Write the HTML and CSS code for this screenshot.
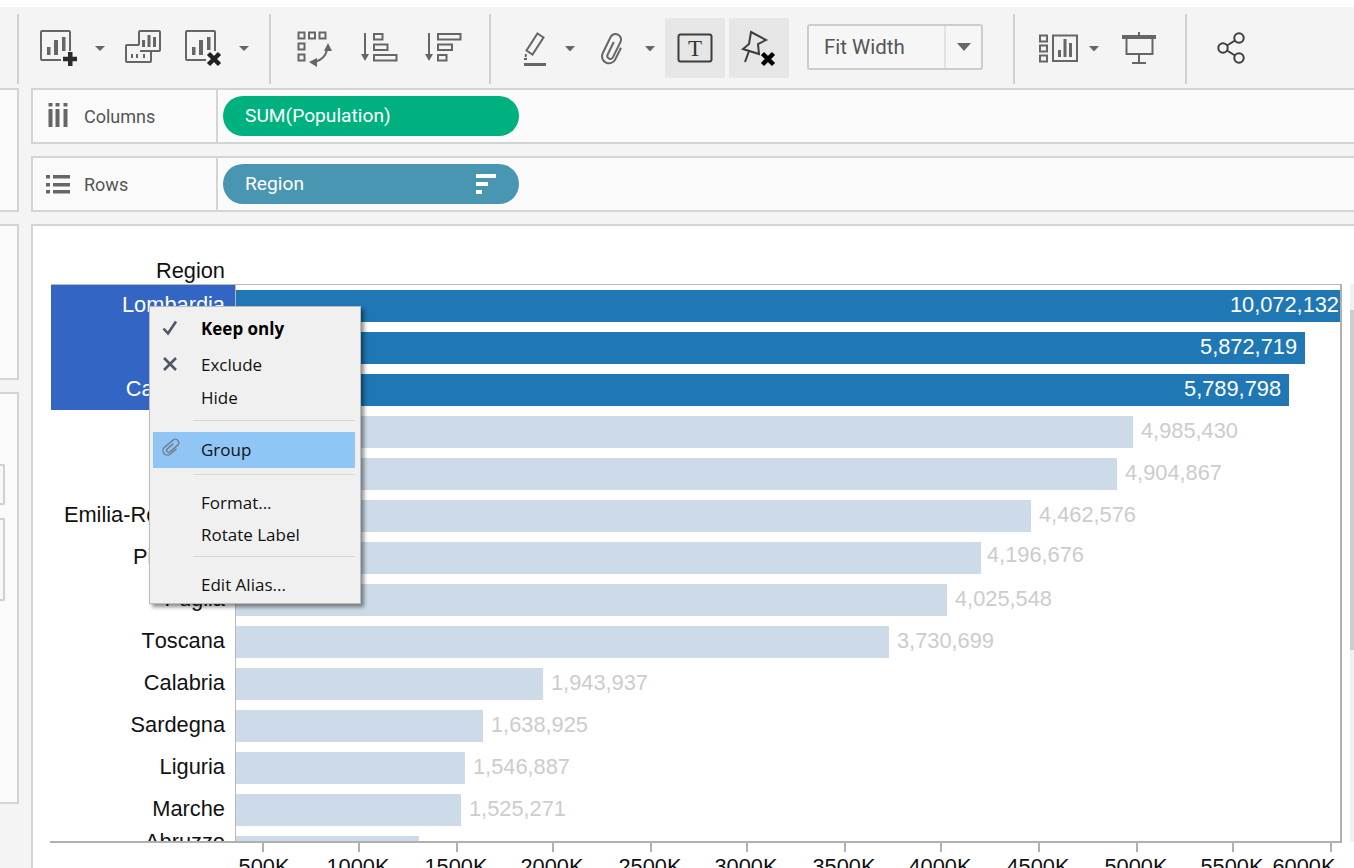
FILE: index.html
```html
<!DOCTYPE html>
<html lang="en">
<head>
<meta charset="utf-8">
<title>Region population</title>
<link rel="stylesheet" href="styles.css">
</head>
<body>
<div class="topgap"></div>
<header class="toolbar">
  <span class="sep s1"></span>
  <svg class="tool t-add" width="65" height="48" viewBox="40 24 65 48">
    <path class="st" d="M70 51V32a1 1 0 0 0-1-1H42a1 1 0 0 0-1 1v27a1 1 0 0 0 1 1h19"/>
    <path class="fl" d="M47 47h3.500v8H47zM54 40h4v15h-4zM62 37h3.500v14H62z"/>
    <path class="dk" d="M68 52h4.500v4.800H77v4.400h-4.500V66H68v-4.800h-5v-4.400h5z"/>
    <path class="fl" d="M95 46h10l-5 5z"/>
  </svg>
  <svg class="tool t-dup" width="37" height="48" viewBox="125 24 37 48">
    <path class="st" d="M139 45v-13a1 1 0 0 1 1-1h19a1 1 0 0 1 1 1v18a1 1 0 0 1-1 1h-7M139 45h-12a1 1 0 0 0-1 1v15a1 1 0 0 0 1 1h23a1 1 0 0 0 1-1v-10h-11"/>
    <path class="fl" d="M142 40h3v7h-3zM147.500 35h3v12h-3zM153 37h3v10h-3zM131 54h2v4h-2zM136 54h2v4h-2zM143 54h2v4h-2z"/>
  </svg>
  <svg class="tool t-clear" width="65" height="48" viewBox="185 24 65 48">
    <path class="st" d="M215 51V32a1 1 0 0 0-1-1h-27a1 1 0 0 0-1 1v27a1 1 0 0 0 1 1h19"/>
    <path class="fl" d="M192 47h3.500v8H192zM199 40h4v15h-4zM207 37h3.500v13H207z"/>
    <path class="xm" d="M208.500 53.500l11 11M219.500 53.500l-11 11"/>
    <path class="fl" d="M239 46h10l-5 5z"/>
  </svg>
  <span class="sep s2"></span>
  <svg class="tool t-swap" width="36" height="48" viewBox="297 24 36 48">
    <path class="st" d="M298.500 32.500h6v6h-6zM309 32.500h6v6h-6zM319.500 32.500h6v6h-6zM298.500 43.500h6v6h-6zM298.500 54.500h6v6h-6zM327 50q-2 9-12 12"/>
    <path class="fl" d="M328 43l4 8h-8zM309 62l8-4v9z"/>
  </svg>
  <svg class="tool t-asc" width="37" height="48" viewBox="361 24 37 48">
    <path class="st" d="M365 33v24M374 34h8.500v5.500H374zM374 44.500h13.500V50H374zM374 55h22.500v5.500H374z"/>
    <path class="fl" d="M361 54h8l-4 7z"/>
  </svg>
  <svg class="tool t-desc" width="37" height="48" viewBox="425 24 37 48">
    <path class="st" d="M429 33v24M438 34h22.500v5.500H438zM438 44.500h14V50H438zM438 55h8.500v5.500H438z"/>
    <path class="fl" d="M425 54h8l-4 7z"/>
  </svg>
  <span class="sep s3"></span>
  <svg class="tool t-hl" width="52" height="48" viewBox="523 24 52 48">
    <path class="st" d="M537.500 33.500l6 4-11 17-6-4zM526 54l-.5 3"/>
    <path class="fl" d="M524 63h22v3h-22zM524 58h3v2h-3z"/>
    <path class="fl" d="M565 46h10l-5 5.500z"/>
  </svg>
  <svg class="tool t-clip" width="55" height="48" viewBox="600 24 55 48">
    <path class="st" transform="translate(612.500 48) rotate(26)" d="M-1.500-6V8a3 3 0 0 0 6 0V-9a5.500 5.500 0 0 0-11 0V9a7 7 0 0 0 14 0V-4"/>
    <path class="fl" d="M645 46h10l-5 5.500z"/>
  </svg>
  <span class="toggle tg-text">
    <svg width="36" height="30" viewBox="677 32 36 30">
      <rect class="st-dark" x="678.500" y="33.500" width="33" height="27" rx="2"/>
      <text class="serif-t" x="695" y="55">T</text>
    </svg>
  </span>
  <span class="toggle tg-pin">
    <svg width="38" height="38" viewBox="744 30 38 38">
      <path class="st-dark" d="M755 33l15 8-8 4 1 10-16-5 6-5zM753 52l-4 11"/>
      <path class="xm-b" d="M766.500 54.500l11 11M777.500 54.500l-11 11"/>
    </svg>
  </span>
  <div class="fit">
    <span class="fit-label">Fit Width</span>
    <span class="fit-drop"><span class="fit-caret"></span></span>
  </div>
  <span class="sep s4"></span>
  <svg class="tool t-show" width="60" height="48" viewBox="1039 24 60 48">
    <path class="st" d="M1040 35.500h7v6h-7zM1040 45.500h7v6h-7zM1040 55.500h7v6h-7zM1053 35.500h24v25.500h-24z"/>
    <path class="fl" d="M1058 50h3v7h-3zM1063.500 39h3v18h-3zM1069 43h3v14h-3zM1089 46h10l-5 5.500z"/>
  </svg>
  <svg class="tool t-pres" width="34" height="48" viewBox="1122 24 34 48">
    <path class="fl" d="M1122 35h34v4h-34zM1138 32h2v4h-2zM1138 54h2v9h-2zM1132 62h14v2h-14z"/>
    <path class="st" d="M1126.500 38v16h26V38"/>
  </svg>
  <span class="sep s5"></span>
  <svg class="tool t-share" width="30" height="48" viewBox="1216 24 30 48">
    <circle class="st-dark" cx="1239" cy="38" r="4.700"/>
    <circle class="st-dark" cx="1223" cy="48" r="4.700"/>
    <circle class="st-dark" cx="1239" cy="58" r="4.700"/>
    <path class="st-dark" d="M1227 45.500l8-5M1227 50.500l8 5"/>
  </svg>
</header>

<div class="workspace">
  <aside class="side">
    <div class="panel p1"></div>
    <div class="panel p2"></div>
    <div class="panel p3">
      <div class="stub st1"></div>
      <div class="stub st2"></div>
    </div>
  </aside>
  <main class="main">
    <section class="shelf">
      <div class="shelf-name">
        <svg class="shelf-ic" width="20" height="26" viewBox="0 0 20 26">
          <path class="fl" d="M0 0h4v3.500H0zM7 0h4v3.500H7zM15 0h4v3.500h-4zM0 6h4v18H0zM7 6h4v18H7zM15 6h4v18h-4z"/>
        </svg>
        <span>Columns</span>
      </div>
      <div class="pill pill-green">SUM(Population)</div>
    </section>
    <section class="shelf">
      <div class="shelf-name">
        <svg class="shelf-ic" width="25" height="20" viewBox="0 0 25 20">
          <path class="fl" d="M0 1h4v3.500H0zM7 1h17v3.500H7zM0 9h4v3.500H0zM7 9h17v3.500H7zM0 16h4v3.500H0zM7 16h17v3.500H7z"/>
        </svg>
        <span>Rows</span>
      </div>
      <div class="pill pill-blue">
        <span>Region</span>
        <svg class="pill-sort" width="20" height="20" viewBox="0 0 20 20"><path class="wh" d="M0 0h20v4H0zM0 8h12v4H0zM0 16h6v4H0z"/></svg>
      </div>
    </section>
    <section class="view">
      <div class="head">Region</div>
      <div class="body">
        <div class="row"><div class="lbl sel">Lombardia</div><div class="plot"><div class="bar bar-on" style="width:1104px"><span>10,072,132</span></div></div></div>
        <div class="row"><div class="lbl sel">Lazio</div><div class="plot"><div class="bar bar-on bar-pad" style="width:1069px"><span>5,872,719</span></div></div></div>
        <div class="row"><div class="lbl sel sel-end">Campania</div><div class="plot"><div class="bar bar-on bar-pad" style="width:1053px"><span>5,789,798</span></div></div></div>
        <div class="row"><div class="lbl">Sicilia</div><div class="plot"><div class="bar" style="width:897px"></div><span class="val">4,985,430</span></div></div>
        <div class="row"><div class="lbl">Veneto</div><div class="plot"><div class="bar" style="width:881px"></div><span class="val">4,904,867</span></div></div>
        <div class="row"><div class="lbl">Emilia-Romagna</div><div class="plot"><div class="bar" style="width:795px"></div><span class="val">4,462,576</span></div></div>
        <div class="row"><div class="lbl">Piemonte</div><div class="plot"><div class="bar" style="width:745px"></div><span class="val val-near">4,196,676</span></div></div>
        <div class="row"><div class="lbl">Puglia</div><div class="plot"><div class="bar" style="width:711px"></div><span class="val">4,025,548</span></div></div>
        <div class="row"><div class="lbl">Toscana</div><div class="plot"><div class="bar" style="width:653px"></div><span class="val">3,730,699</span></div></div>
        <div class="row"><div class="lbl">Calabria</div><div class="plot"><div class="bar" style="width:307px"></div><span class="val">1,943,937</span></div></div>
        <div class="row"><div class="lbl">Sardegna</div><div class="plot"><div class="bar" style="width:247px"></div><span class="val">1,638,925</span></div></div>
        <div class="row"><div class="lbl">Liguria</div><div class="plot"><div class="bar" style="width:229px"></div><span class="val">1,546,887</span></div></div>
        <div class="row"><div class="lbl">Marche</div><div class="plot"><div class="bar" style="width:225px"></div><span class="val">1,525,271</span></div></div>
        <div class="row"><div class="lbl lbl-clip">Abruzzo</div><div class="plot"><div class="bar" style="width:183px"></div><span class="val">1,307,309</span></div></div>
      </div>
      <div class="axis">
        <i class="tick" style="left:212px"></i><span class="tl" style="left:214px">500K</span>
        <i class="tick" style="left:308px"></i><span class="tl" style="left:308px">1000K</span>
        <i class="tick" style="left:406px"></i><span class="tl" style="left:406px">1500K</span>
        <i class="tick" style="left:502px"></i><span class="tl" style="left:502px">2000K</span>
        <i class="tick" style="left:600px"></i><span class="tl" style="left:600px">2500K</span>
        <i class="tick" style="left:696px"></i><span class="tl" style="left:696px">3000K</span>
        <i class="tick" style="left:794px"></i><span class="tl" style="left:794px">3500K</span>
        <i class="tick" style="left:890px"></i><span class="tl" style="left:890px">4000K</span>
        <i class="tick" style="left:988px"></i><span class="tl" style="left:988px">4500K</span>
        <i class="tick" style="left:1086px"></i><span class="tl" style="left:1086px">5000K</span>
        <i class="tick" style="left:1182px"></i><span class="tl" style="left:1182px">5500K</span>
        <i class="tick" style="left:1280px"></i><span class="tl" style="left:1254px">6000K</span>
      </div>
      <div class="scroll"><div class="thumb"></div></div>
    </section>
    <nav class="menu">
      <div class="mi mi-first mi-bold">
        <svg class="mi-ic" width="18" height="18" viewBox="0 0 18 18"><path class="chk" d="M2.500 9.500l4.500 5L15 2.500"/></svg>
        <span>Keep only</span>
      </div>
      <div class="mi mi-excl">
        <svg class="mi-ic" width="18" height="18" viewBox="0 0 18 18"><path class="chk" d="M3 3l12 12M15 3L3 15"/></svg>
        <span>Exclude</span>
      </div>
      <div class="mi mi-hide"><span>Hide</span></div>
      <div class="msep"></div>
      <div class="mi mi-on">
        <svg class="mi-ic" width="20" height="18" viewBox="0 0 20 18"><path class="clip" transform="translate(10 9) rotate(50)" d="M-1-4V4a2 2 0 0 0 4 0V-6a3.500 3.500 0 0 0-7 0V5a4.500 4.500 0 0 0 9 0V-3"/></svg>
        <span>Group</span>
      </div>
      <div class="msep"></div>
      <div class="mi"><span>Format...</span></div>
      <div class="mi"><span>Rotate Label</span></div>
      <div class="msep msep-tight"></div>
      <div class="mi"><span>Edit Alias...</span></div>
    </nav>
  </main>
</div>
</body>
</html>
```
FILE: styles.css
```css
* { box-sizing: border-box; }
html, body { margin: 0; padding: 0; height: 868px; overflow: hidden; }
body { background: #f4f4f4; font-family: "Roboto", "Liberation Sans", sans-serif; }
.topgap { height: 7px; background: #fff; }

.toolbar { display: flex; align-items: flex-start; height: 81px; padding-top: 7px; background: #f4f4f4; }
.sep { flex: none; width: 2px; height: 70px; background: #d0d0d0; }
.tool { flex: none; display: block; margin-top: 10px; }
.st { fill: none; stroke: #666; stroke-width: 2; }
.st-dark { fill: none; stroke: #3d3d3d; stroke-width: 2; }
.fl { fill: #666; }
.dk { fill: #2b2b2b; }
.xm { fill: none; stroke: #222; stroke-width: 4.500; }
.xm-b { fill: none; stroke: #000; stroke-width: 4.500; }
.serif-t { font-family: "Liberation Serif", serif; font-size: 23px; fill: #333; text-anchor: middle; }
.s1 { margin-left: 17px; }
.t-add { margin-left: 21px; }
.t-dup { margin-left: 20px; }
.t-clear { margin-left: 23px; }
.s2 { margin-left: 19px; }
.t-swap { margin-left: 26px; }
.t-asc { margin-left: 28px; }
.t-desc { margin-left: 27px; }
.s3 { margin-left: 27px; }
.t-hl { margin-left: 32px; }
.t-clip { margin-left: 25px; }
.toggle { flex: none; display: flex; align-items: center; justify-content: center; width: 60px; height: 60px; margin-top: 4px; background: #e6e6e6; }
.tg-text { margin-left: 10px; }
.tg-pin { margin-left: 4px; }
.fit { flex: none; display: flex; width: 176px; height: 46px; margin: 10px 0 0 18px; border: 2px solid #ccc; border-radius: 3px; background: #f6f6f6; }
.fit-label { flex: 1; padding-left: 15px; line-height: 42px; font-size: 20.500px; color: #555; }
.fit-drop { flex: none; display: flex; align-items: center; justify-content: center; width: 37px; border-left: 2px solid #e2e2e2; }
.fit-caret { width: 0; height: 0; border-style: solid; border-width: 8px 7px 0; border-color: #666 transparent transparent; }
.s4 { margin-left: 30px; }
.t-show { margin-left: 24px; }
.t-pres { margin-left: 23px; }
.s5 { margin-left: 29px; }
.t-share { margin-left: 29px; }

.workspace { display: flex; height: 780px; }
.side { flex: none; width: 19px; margin-right: 12px; display: flex; flex-direction: column; gap: 12px; }
.panel { flex: none; margin-left: -4px; background: #fafafa; border: 2px solid #d4d4d4; }
.p1 { height: 124px; }
.p2 { height: 156px; }
.p3 { height: 412px; padding-top: 70px; display: flex; flex-direction: column; gap: 13px; }
.stub { margin-left: -2px; width: 9px; background: #f8f8f8; border: 2px solid #d0d0d0; border-left: 0; border-radius: 0 2px 2px 0; }
.st1 { height: 41px; }
.st2 { height: 83px; }

.main { flex: 1; min-width: 0; display: flex; flex-direction: column; gap: 12px; }
.shelf { flex: none; display: flex; align-items: center; height: 56px; background: #fafafa; border: 2px solid #d4d4d4; border-right: 0; }
.shelf-name { flex: none; display: flex; align-items: center; width: 185px; height: 100%; padding-left: 13px; border-right: 2px solid #d4d4d4; font-size: 18px; color: #555; }
.shelf-ic { flex: none; width: 38px; padding-right: 13px; overflow: visible; }
.pill { flex: none; display: flex; align-items: center; justify-content: space-between; width: 296px; height: 40px; margin-left: 5px; padding: 0 23px 2px 22px; border-radius: 20px; font-size: 19.200px; color: #fff; }
.pill-sort { margin-top: 2px; }
.pill-green { background: #00b180; }
.pill-blue { background: #4996b2; }
.wh { fill: #fff; }

.view { position: relative; flex: none; height: 644px; overflow: hidden; background: #fff; border: 2px solid #d4d4d4; border-width: 2px 0 0 2px; font-family: "Liberation Sans", Arial, sans-serif; font-size: 21.800px; font-kerning: none; }
.head { height: 58px; margin-left: 18px; width: 184px; padding: 32px 10px 0 0; text-align: right; line-height: 25px; color: #111; }
.body { height: 558px; margin-left: 18px; width: 1291px; overflow: hidden; border-top: 1px solid #b8b8b8; }
.row { display: flex; height: 42px; }
.lbl { flex: none; width: 184px; padding-right: 10px; text-align: right; line-height: 40px; color: #111; white-space: nowrap; }
.sel { background: #3366c4; color: #fff; }
.sel-end { height: 41px; }
.lbl-clip { margin-top: -9px; height: 51px; }
.plot { flex: 1; display: flex; align-items: flex-start; padding-top: 5px; border-left: 1px solid #b8b8b8; border-right: 2px solid #b0b0b0; }
.bar { flex: none; height: 32px; background: #cddbe8; }
.bar-on { display: flex; align-items: center; justify-content: flex-end; padding: 0 1px 2px 0; background: #1f77b4; color: #fff; }
.bar-pad { padding-right: 8px; }
.val { margin-left: 8px; line-height: 30px; color: #ccc; }
.val-near { margin-left: 6px; margin-top: -2px; }

.axis { position: relative; height: 26px; margin-left: 17px; width: 1292px; margin-top: -1px; border-top: 2px solid #b0b0b0; }
.tick { position: absolute; top: 0; width: 2px; height: 9px; background: #b0b0b0; }
.tl { position: absolute; top: 11px; color: #111; line-height: 25px; transform: translateX(-50%); white-space: nowrap; }

.scroll { position: absolute; left: 1317px; top: 58px; width: 4px; height: 558px; background: #f0f0f0; }
.thumb { width: 100%; height: 340px; margin-top: 26px; background: #cdcdcd; }

.menu { position: absolute; left: 149px; top: 306px; width: 212px; height: 298px; padding-top: 6px; background: #f0f0f0; border: 1px solid #bcbcbc; box-shadow: 3px 3px 4px rgba(0,0,0,.45); font-family: "Open Sans", "Liberation Sans", sans-serif; font-size: 17px; color: #111; }
.mi { position: relative; display: flex; align-items: center; height: 32px; margin: 0 5px 0 3px; padding: 0 0 2px 48px; }
.mi-ic { position: absolute; left: 8px; top: 6px; }
.mi-bold { font-weight: 700; color: #000; }
.mi-excl { margin-top: 4px; }
.mi-hide { margin-top: 1px; }
.mi-on { height: 36px; background: #90c6f6; }
.msep { height: 1px; margin: 6px 5px 11px 43px; background: #d8d8d8; }
.msep-tight { margin-top: 5px; margin-bottom: 12px; }
.mi-on + .msep { margin-bottom: 12px; }
.chk { fill: none; stroke: #4d5766; stroke-width: 2.600; }
.clip { fill: none; stroke: #73808e; stroke-width: 1.500; }
```
